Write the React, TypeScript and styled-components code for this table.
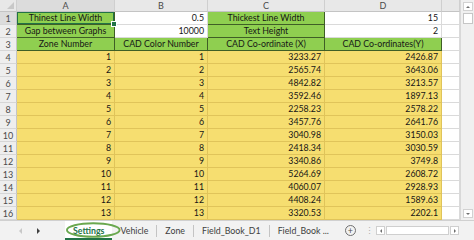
import React from 'react'
import styled, { createGlobalStyle } from 'styled-components'

const GlobalStyle = createGlobalStyle`
	html, body {
		margin: 0;
		padding: 0;
		background: #ffffff;
	}
	body {
		font-family: Lato, 'Liberation Sans', Arial, sans-serif;
	}
`

type Tone = 'green' | 'yellow' | 'white' | 'blank'

const TONE_BG: Record<Tone, string> = {
	green: '#8fcf50',
	yellow: '#f6de70',
	white: '#ffffff',
	blank: '#ffffff',
}

const TONE_LINE: Record<Tone, string> = {
	green: '#3f5f26',
	yellow: '#e0c45a',
	white: '#dadada',
	blank: '#dadada',
}

const Window = styled.div`
	width: 474px;
	height: 240px;
	display: flex;
	flex-direction: column;
	overflow: hidden;
	color: #161616;
`

const Body = styled.div`
	display: flex;
	height: 220px;
`

const Sheet = styled.div`
	flex: 1;
	display: grid;
	grid-template-columns: 17px 98px 93px 117px 117px 1fr;
	grid-template-rows: 12px repeat(16, 13px);
	font-size: 8.8px;
`

const ColHead = styled.div<{ $active?: boolean }>`
	background: ${p => (p.$active ? '#dcdcdc' : '#e8e8e8')};
	border-right: 1px solid #cfcfcf;
	border-bottom: 1px solid #c4c4c4;
	color: #4a4a4a;
	font-size: 9px;
	display: flex;
	align-items: center;
	justify-content: center;
`

const Corner = styled.div`
	background: #e8e8e8;
	border-right: 1px solid #cfcfcf;
	border-bottom: 1px solid #c4c4c4;
	position: relative;
	&::after {
		content: '';
		position: absolute;
		right: 2px;
		bottom: 2px;
		border-left: 7px solid transparent;
		border-bottom: 7px solid #c8c8c8;
	}
`

const RowHead = styled.div<{ $active?: boolean }>`
	background: ${p => (p.$active ? '#dcdcdc' : '#eeeeee')};
	border-right: 1px solid #c4c4c4;
	border-bottom: 1px solid #d6d6d6;
	color: #4a4a4a;
	font-size: 9px;
	display: flex;
	align-items: center;
	justify-content: center;
`

const Cell = styled.div<{ $tone: Tone; $align?: 'left' | 'right' | 'center'; $selected?: boolean }>`
	position: relative;
	background: ${p => TONE_BG[p.$tone]};
	border-right: 1px solid ${p => TONE_LINE[p.$tone]};
	border-bottom: 1px solid ${p => TONE_LINE[p.$tone]};
	display: flex;
	align-items: center;
	justify-content: ${p =>
		p.$align === 'right' ? 'flex-end' : p.$align === 'left' ? 'flex-start' : 'center'};
	padding: 0 3px;
	white-space: nowrap;
	overflow: hidden;
	line-height: 1;
	${p =>
		p.$selected &&
		`
		overflow: visible;
		box-shadow: inset 0 0 0 1px #217346;
		&::after {
			content: '';
			position: absolute;
			right: -3px;
			bottom: -3px;
			width: 4px;
			height: 4px;
			background: #217346;
			border: 1px solid #ffffff;
			z-index: 2;
		}
	`}
`

const VScroll = styled.div`
	width: 14px;
	background: #f0f0f0;
	border-left: 1px solid #d8d8d8;
	display: flex;
	flex-direction: column;
	align-items: center;
	padding: 2px 0;
	box-sizing: border-box;
	gap: 2px;
`

const ArrowBox = styled.div<{ $down?: boolean }>`
	width: 10px;
	height: 9px;
	background: #ffffff;
	border: 1px solid #d2d2d2;
	box-sizing: border-box;
	display: flex;
	align-items: center;
	justify-content: center;
	margin-top: ${p => (p.$down ? 'auto' : '0')};
	&::before {
		content: '';
		border-left: 2px solid transparent;
		border-right: 2px solid transparent;
		${p => (p.$down ? 'border-top: 2px solid #707070;' : 'border-bottom: 2px solid #707070;')}
	}
`

const Thumb = styled.div`
	width: 10px;
	height: 11px;
	background: #ffffff;
	border: 1px solid #c6c6c6;
	box-sizing: border-box;
`

const TabBar = styled.div`
	height: 20px;
	display: flex;
	align-items: center;
	background: #f2f2f2;
	border-top: 1px solid #d0d0d0;
	box-sizing: border-box;
	font-size: 8.8px;
	color: #404040;
	padding-left: 11px;
	& > * {
		flex-shrink: 0;
	}
`

const NavArrow = styled.div<{ $dim?: boolean }>`
	width: 18px;
	display: flex;
	justify-content: center;
	&::before {
		content: '';
		border-top: 3px solid transparent;
		border-bottom: 3px solid transparent;
		border-left: 3px solid ${p => (p.$dim ? '#c8c8c8' : '#404040')};
		${p => p.$dim && 'transform: scaleX(-1);'}
	}
`

const TabStrip = styled.div`
	margin-left: 18px;
	height: 100%;
	display: flex;
	align-items: center;
	& > * {
		flex-shrink: 0;
	}
`

const Tab = styled.div<{ $active?: boolean }>`
	position: relative;
	height: 100%;
	display: flex;
	align-items: center;
	padding: 0 8px;
	background: ${p => (p.$active ? '#ffffff' : 'transparent')};
	color: ${p => (p.$active ? '#217346' : '#404040')};
	font-weight: ${p => (p.$active ? 700 : 400)};
	box-shadow: ${p => (p.$active ? 'inset 0 -2px 0 #217346' : 'none')};
	white-space: nowrap;
`

const TabSep = styled.div`
	width: 1px;
	height: 12px;
	background: #c4c4c4;
`

const Ring = styled.svg`
	position: absolute;
	left: 1px;
	top: 1px;
	width: calc(100% + 9px);
	height: 16px;
	overflow: visible;
	pointer-events: none;
`

const AddButton = styled.div`
	width: 9px;
	height: 9px;
	border: 1px solid #707070;
	border-radius: 50%;
	margin-left: 8px;
	display: flex;
	align-items: center;
	justify-content: center;
	font-size: 9px;
	line-height: 1;
	color: #505050;
`

const Dots = styled.div`
	margin-left: 9px;
	color: #b0b0b0;
	font-size: 9px;
`

const HScroll = styled.div`
	margin-left: auto;
	margin-right: 15px;
	display: flex;
	align-items: center;
	gap: 1px;
`

const HArrow = styled.div<{ $right?: boolean }>`
	width: 9px;
	height: 9px;
	background: #ffffff;
	border: 1px solid #cfcfcf;
	box-sizing: border-box;
	display: flex;
	align-items: center;
	justify-content: center;
	&::before {
		content: '';
		border-top: 2px solid transparent;
		border-bottom: 2px solid transparent;
		${p => (p.$right ? 'border-left: 2px solid #707070;' : 'border-right: 2px solid #707070;')}
	}
`

const HTrack = styled.div`
	width: 63px;
	height: 9px;
	background: #ffffff;
	border: 1px solid #cfcfcf;
	box-sizing: border-box;
`

const points: [number, number][] = [
	[3233.27, 2426.87],
	[2565.74, 3643.06],
	[4842.82, 3213.57],
	[3592.46, 1897.13],
	[2258.23, 2578.22],
	[3457.76, 2641.76],
	[3040.98, 3150.03],
	[2418.34, 3030.59],
	[3340.86, 3749.8],
	[5264.69, 2608.72],
	[4060.07, 2928.93],
	[4408.24, 1589.63],
	[3320.53, 2202.1],
]

const columns = ['A', 'B', 'C', 'D', '']

const App = () => (
	<Window>
		<GlobalStyle />
		<Body>
			<Sheet>
				<Corner />
				{columns.map((c, i) => (
					<ColHead key={c || 'E'} $active={i === 0}>
						{c}
					</ColHead>
				))}

				<RowHead $active>1</RowHead>
				<Cell $tone='green' $selected>Thinest Line Width</Cell>
				<Cell $tone='white' $align='right'>0.5</Cell>
				<Cell $tone='green'>Thickest Line Width</Cell>
				<Cell $tone='white' $align='right'>15</Cell>
				<Cell $tone='blank' />

				<RowHead>2</RowHead>
				<Cell $tone='green'>Gap between Graphs</Cell>
				<Cell $tone='white' $align='right'>10000</Cell>
				<Cell $tone='green'>Text Height</Cell>
				<Cell $tone='white' $align='right'>2</Cell>
				<Cell $tone='blank' />

				<RowHead>3</RowHead>
				<Cell $tone='green'>Zone Number</Cell>
				<Cell $tone='green'>CAD Color Number</Cell>
				<Cell $tone='green'>CAD Co-ordinate (X)</Cell>
				<Cell $tone='green'>CAD Co-ordinates(Y)</Cell>
				<Cell $tone='blank' />

				{points.map(([x, y], i) => (
					<React.Fragment key={i}>
						<RowHead>{i + 4}</RowHead>
						<Cell $tone='yellow' $align='right'>{i + 1}</Cell>
						<Cell $tone='yellow' $align='right'>{i + 1}</Cell>
						<Cell $tone='yellow' $align='right'>{x}</Cell>
						<Cell $tone='yellow' $align='right'>{y}</Cell>
						<Cell $tone='blank' />
					</React.Fragment>
				))}
			</Sheet>
			<VScroll>
				<ArrowBox />
				<Thumb />
				<ArrowBox $down />
			</VScroll>
		</Body>
		<TabBar>
			<NavArrow $dim />
			<NavArrow />
			<TabStrip>
				<Tab $active>
					Settings
					<Ring viewBox='0 0 60 16' preserveAspectRatio='none'>
						<ellipse cx='29' cy='8' rx='28' ry='6.8' fill='none' stroke='#6aa84f' strokeWidth='2' />
					</Ring>
				</Tab>
				<Tab>Vehicle</Tab>
				<TabSep />
				<Tab>Zone</Tab>
				<TabSep />
				<Tab>Field_Book_D1</Tab>
				<TabSep />
				<Tab>Field_Book ...</Tab>
				<AddButton>+</AddButton>
				<Dots>⋮</Dots>
			</TabStrip>
			<HScroll>
				<HArrow />
				<HTrack />
				<HArrow $right />
			</HScroll>
		</TabBar>
	</Window>
)

export default App
